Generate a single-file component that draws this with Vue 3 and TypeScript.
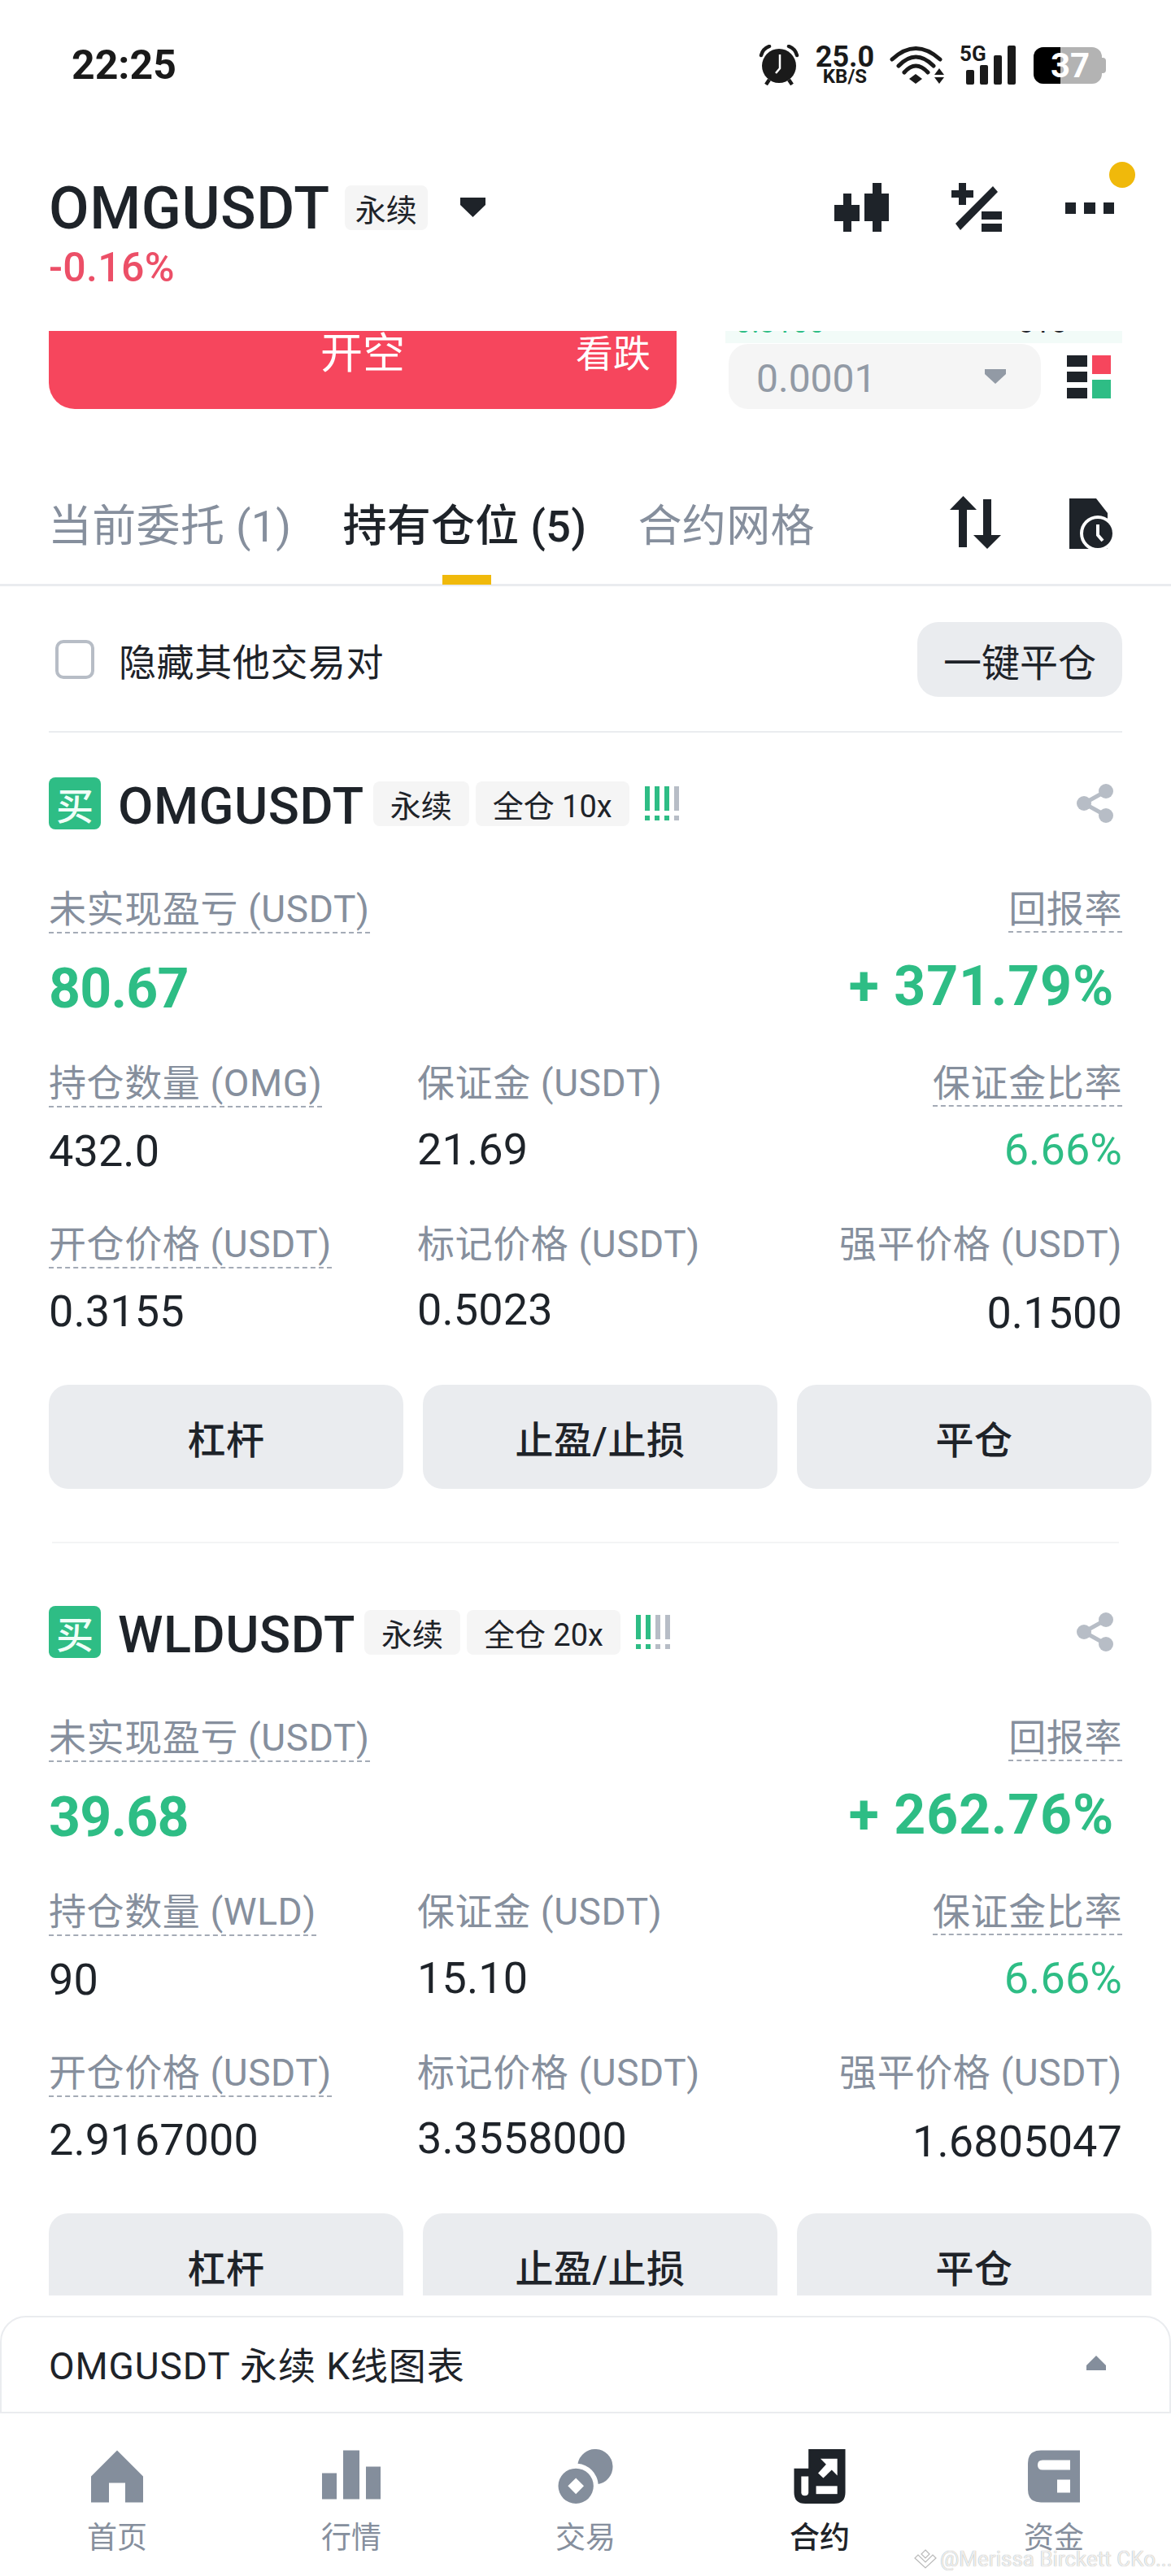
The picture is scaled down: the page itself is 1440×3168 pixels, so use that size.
<template>
  <div class="page">
    <div class="status">
      <span class="time">22:25</span>
      <div class="status-right">
        <svg class="ic-alarm" viewBox="0 0 50 50" width="50" height="50">
          <circle cx="25" cy="26" r="21" fill="#1a1a1a" />
          <path d="M3 13Q5 5 13 2M47 13Q45 5 37 2" fill="none" stroke="#1a1a1a" stroke-width="4.5" stroke-linecap="round" />
          <path d="M9 49l4-6M41 49l-4-6" stroke="#1a1a1a" stroke-width="4.5" />
          <path d="M26 12V29L21 35" fill="none" stroke="#fff" stroke-width="2.5" />
        </svg>
        <div class="speed">
          <span class="speed-num">25.0</span>
          <span class="speed-unit">KB/S</span>
        </div>
        <svg class="ic-wifi" viewBox="0 0 68 48" width="68" height="48">
          <path d="M3 17Q32 -10 62 17M11 25Q32 3 54 25M18 33Q32 17 47 33" fill="none" stroke="#1a1a1a" stroke-width="5" stroke-linecap="round" />
          <path d="M32 35l8 6-8 6-8-6z" fill="#1a1a1a" />
          <path d="M61 28l6 8H55zM61 47l-6-8h12z" fill="#1a1a1a" />
        </svg>
        <div class="signal">
          <span class="five-g">5G</span>
          <svg viewBox="0 0 61 48" width="61" height="48">
            <rect y="30" width="10" height="18" rx="2" fill="#1a1a1a" />
            <rect x="17" y="24" width="10" height="24" rx="2" fill="#1a1a1a" />
            <rect x="34" y="12" width="10" height="36" rx="2" fill="#1a1a1a" />
            <rect x="51" width="10" height="48" rx="2" fill="#1a1a1a" />
          </svg>
        </div>
        <div class="battery">
          <span class="battery-level"></span>
          <span class="battery-num">37</span>
          <span class="battery-nub"></span>
        </div>
      </div>
    </div>

    <div class="header">
      <div>
        <div class="symbol-row">
          <span class="symbol">OMGUSDT</span>
          <span class="tag tag-top">永续</span>
          <svg class="symbol-caret" viewBox="0 0 31 24" width="31" height="24">
            <path d="M0 0H31V9L15.5 24L0 9Z" fill="#1e2329" />
          </svg>
        </div>
        <div class="change">-0.16%</div>
      </div>
      <div class="header-icons">
        <svg viewBox="0 0 68 60" width="68" height="60" fill="#1e2329">
          <path d="M11 13H21V27H31V47H21V60H11V47H0V27H11Z" />
          <path d="M47 0H58V13H67V47H58V60H47V47H37V13H47Z" />
        </svg>
        <svg viewBox="0 0 62 60" width="62" height="60" fill="#1e2329">
          <path d="M9 0H18V9H27V18H18V27H9V18H0V9H9Z" />
          <path d="M51 4L57 11L11 58L5 50Z" />
          <path d="M37 35H62V45H37ZM37 50H62V60H37Z" />
        </svg>
        <div class="more">
          <svg viewBox="0 0 60 14" width="60" height="14" fill="#1e2329">
            <rect width="13" height="14" />
            <rect x="23" width="14" height="14" />
            <rect x="47" width="13" height="14" />
          </svg>
          <span class="more-dot"></span>
        </div>
      </div>
    </div>

    <div class="scroll">
      <div class="trade">
        <div class="short-btn">
          <span></span>
          <span class="short-main">开空</span>
          <span class="short-sub">看跌</span>
        </div>
        <div class="book">
          <div class="book-strip"><span class="strip-green">0.3100</span><span class="strip-dark">515</span></div>
          <div class="book-foot">
            <div class="step">
              <span>0.0001</span>
              <svg viewBox="0 0 26 18" width="26" height="18"><path d="M0 0H26V6L13 18L0 6Z" fill="#929aa5" /></svg>
            </div>
            <svg viewBox="0 0 55 53" width="55" height="53">
              <path d="M0 0H25V14H0ZM0 20H25V33H0ZM0 40H25V53H0Z" fill="#1e2329" />
              <rect x="31" width="23" height="23" fill="#f6465d" />
              <rect x="31" y="30" width="23" height="23" fill="#2ebd85" />
            </svg>
          </div>
        </div>
      </div>

      <div class="tabs">
        <span class="tab">当前委托 (1)</span>
        <span class="tab tab-active">持有仓位 (5)</span>
        <span class="tab">合约网格</span>
        <div class="tab-icons">
          <svg viewBox="0 0 63 65" width="63" height="65" fill="#1e2329">
            <path d="M11 17H0L16.500 0L33 17H21V63H11Z" />
            <path d="M41 4H51V48H63L46 65L29 48H41Z" />
          </svg>
          <svg viewBox="0 0 53 62" width="53" height="62">
            <path d="M0 0H33L47 18V63H0Z" fill="#1e2329" />
            <circle cx="35" cy="43" r="22" fill="#fff" />
            <circle cx="35" cy="43" r="18" fill="#1e2329" />
            <path d="M35 32V45L41 52" fill="none" stroke="#fff" stroke-width="4" />
          </svg>
        </div>
      </div>

      <div class="hide-row">
        <label class="hide-check">
          <span class="checkbox"></span>
          <span>隐藏其他交易对</span>
        </label>
        <button class="close-all">一键平仓</button>
      </div>

      <div v-for="(pos, i) in positions" :key="pos.symbol" class="position" :class="{ 'position-next': i > 0 }">
        <div class="pos-head">
          <span class="buy">买</span>
          <span class="pos-symbol">{{ pos.symbol }}</span>
          <span class="tag">永续</span>
          <span class="tag tag-margin">全仓 {{ pos.leverage }}</span>
          <div class="risk">
            <span v-for="n in 4" :key="n" class="risk-bar" :class="{ on: n <= pos.risk }"></span>
          </div>
          <svg class="share" viewBox="0 0 45 48" width="45" height="48">
            <path d="M36 9L9 24L36 39" fill="none" stroke="#b7bdc6" stroke-width="5" />
            <circle cx="36" cy="9" r="9" fill="#b7bdc6" />
            <circle cx="9" cy="24" r="9" fill="#b7bdc6" />
            <circle cx="36" cy="39" r="9" fill="#b7bdc6" />
          </svg>
        </div>

        <div class="pnl-row">
          <div>
            <span class="label dotted">未实现盈亏 (USDT)</span>
            <div class="pnl">{{ pos.pnl }}</div>
          </div>
          <div class="cell-right">
            <span class="label dotted dotted-right">回报率</span>
            <div class="pnl pnl-roe">{{ pos.roe }}</div>
          </div>
        </div>

        <div v-for="(row, r) in rows(pos)" :key="r" class="grid-row" :class="{ 'grid-row-last': r === 1 }">
          <div
            v-for="cell in row"
            :key="cell.label"
            class="cell"
            :class="{ 'cell-right': cell.right }"
          >
            <div class="label-box">
              <span class="label" :class="{ dotted: cell.dotted, 'dotted-right': cell.dotted && cell.right }">{{ cell.label }}</span>
            </div>
            <div class="value" :class="{ 'value-up': cell.up }" :style="{ marginTop: cell.gap + 'px' }">{{ cell.value }}</div>
          </div>
        </div>

        <div class="actions">
          <button>杠杆</button>
          <button>止盈/止损</button>
          <button>平仓</button>
        </div>
      </div>
    </div>

    <div class="chart-bar">
      <span>OMGUSDT 永续 K线图表</span>
      <svg viewBox="0 0 24 18" width="24" height="18"><path d="M12 0L24 12V18H0V12Z" fill="#848e9c" /></svg>
    </div>

    <nav class="nav">
      <div class="nav-item">
        <svg viewBox="0 0 64 64" width="64" height="64" fill="#848e9c">
          <path d="M32 0L64 32V64H42V40H22V64H0V32Z" />
        </svg>
        <span>首页</span>
      </div>
      <div class="nav-item">
        <svg viewBox="0 0 72 64" width="72" height="64" fill="#848e9c">
          <path d="M0 28H18V60H0ZM26 0H46V60H26ZM54 20H72V60H54Z" />
        </svg>
        <span>行情</span>
      </div>
      <div class="nav-item">
        <svg viewBox="0 0 68 68" width="68" height="68" fill="#848e9c">
          <path d="M24.35 18.09A22 22 0 1 1 49.9 43.65A28 28 0 0 0 24.35 18.09Z" />
          <path fill-rule="evenodd" d="M22 24A22 22 0 1 1 22 68A22 22 0 1 1 22 24ZM22 36L12 46L22 56L32 46Z" />
        </svg>
        <span>交易</span>
      </div>
      <div class="nav-item nav-active">
        <svg viewBox="0 0 64 68" width="64" height="68">
          <path d="M18 0H64V54Q64 68 50 68H14Q0 68 0 54V24H18Z" fill="#1e2329" />
          <path d="M9 34H18V54Q18 58 13.500 58Q9 58 9 54Z" fill="#fff" />
          <path d="M27.500 46H54V56H27.500Z" fill="#fff" />
          <path d="M33 12H54V33L47 26L36.500 36L30 30L40 19Z" fill="#fff" />
        </svg>
        <span>合约</span>
      </div>
      <div class="nav-item">
        <svg viewBox="0 0 64 64" width="64" height="64">
          <path d="M16 0H64V64H16Q0 64 0 48V16Q0 0 16 0Z" fill="#848e9c" />
          <path d="M18 12H52V24H18Q12 24 12 18Q12 12 18 12Z" fill="#fff" />
          <rect x="36" y="36" width="16" height="16" fill="#fff" />
        </svg>
        <span>资金</span>
      </div>
    </nav>

    <div class="watermark">
      <svg viewBox="0 0 28 24" width="28" height="24" fill="none" stroke="#b9b9b9" stroke-width="1.200">
        <path d="M14 1l5 5-5 5-5-5zM1 11l13 12 13-12-4-4-9 9-9-9z" />
      </svg>
      <span>@Merissa Birckett CKo...</span>
    </div>
  </div>
</template>

<script setup lang="ts">
interface Position {
  symbol: string
  base: string
  leverage: string
  risk: number
  pnl: string
  roe: string
  size: string
  margin: string
  ratio: string
  entry: string
  mark: string
  liq: string
}

interface Cell {
  label: string
  value: string
  gap: number
  dotted?: boolean
  right?: boolean
  up?: boolean
}

const positions: Position[] = [
  {
    symbol: 'OMGUSDT',
    base: 'OMG',
    leverage: '10x',
    risk: 3,
    pnl: '80.67',
    roe: '+ 371.79%',
    size: '432.0',
    margin: '21.69',
    ratio: '6.66%',
    entry: '0.3155',
    mark: '0.5023',
    liq: '0.1500',
  },
  {
    symbol: 'WLDUSDT',
    base: 'WLD',
    leverage: '20x',
    risk: 2,
    pnl: '39.68',
    roe: '+ 262.76%',
    size: '90',
    margin: '15.10',
    ratio: '6.66%',
    entry: '2.9167000',
    mark: '3.3558000',
    liq: '1.6805047',
  },
]

const rows = (p: Position): Cell[][] => [
  [
    { label: `持仓数量 (${p.base})`, value: p.size, gap: 23, dotted: true },
    { label: '保证金 (USDT)', value: p.margin, gap: 21 },
    { label: '保证金比率', value: p.ratio, gap: 21, dotted: true, right: true, up: true },
  ],
  [
    { label: '开仓价格 (USDT)', value: p.entry, gap: 22, dotted: true },
    { label: '标记价格 (USDT)', value: p.mark, gap: 20 },
    { label: '强平价格 (USDT)', value: p.liq, gap: 24, right: true },
  ],
]
</script>

<style>
html,
body {
  margin: 0;
  background: #fff;
}
</style>

<style scoped>
.page {
  position: relative;
  width: 1440px;
  height: 3168px;
  display: flex;
  flex-direction: column;
  overflow: hidden;
  background: #fff;
  color: #1e2329;
  font-family: Roboto, "Noto Sans CJK SC", sans-serif;
}

.status {
  height: 160px;
  flex: none;
  display: flex;
  align-items: center;
  justify-content: space-between;
  padding: 0 85px 0 88px;
  box-sizing: border-box;
  color: #1a1a1a;
}

.time {
  font-size: 50px;
  font-weight: 700;
}

.status-right {
  display: flex;
  align-items: center;
}

.ic-alarm {
  margin-right: 18px;
}

.speed {
  display: flex;
  flex-direction: column;
  align-items: center;
  width: 76px;
  font-weight: 700;
}

.speed-num {
  font-size: 36px;
  line-height: 28px;
}

.speed-unit {
  font-size: 24px;
  line-height: 20px;
}

.ic-wifi {
  margin-left: 17px;
}

.signal {
  position: relative;
  margin-left: 18px;
  padding-left: 8px;
  display: flex;
}

.five-g {
  position: absolute;
  left: 0;
  top: -3px;
  font-size: 26px;
  line-height: 26px;
  font-weight: 700;
}

.battery {
  position: relative;
  margin-left: 22px;
  width: 84px;
  height: 45px;
  border-radius: 12px;
  background: #b3b3b3;
  overflow: visible;
  display: flex;
  align-items: center;
}

.battery-level {
  width: 33px;
  height: 45px;
  background: #000;
  border-radius: 12px 0 0 12px;
}

.battery-num {
  position: absolute;
  left: 21px;
  top: 0;
  line-height: 45px;
  font-size: 42px;
  font-weight: 700;
  color: #fff;
}

.battery-nub {
  position: absolute;
  left: 84px;
  top: 13px;
  width: 5px;
  height: 19px;
  background: #b3b3b3;
  border-radius: 0 4px 4px 0;
}

.header {
  height: 247px;
  flex: none;
  display: flex;
  justify-content: space-between;
  padding: 57px 70px 0 60px;
  box-sizing: border-box;
}

.symbol-row {
  display: flex;
  align-items: center;
  height: 80px;
}

.symbol {
  font-size: 72px;
  line-height: 80px;
  font-weight: 500;
  letter-spacing: 0.6px;
}

.tag {
  height: 55px;
  padding: 0 21px;
  display: flex;
  align-items: center;
  background: #f5f5f5;
  border-radius: 8px;
  font-size: 38px;
  white-space: nowrap;
  box-sizing: border-box;
}

.tag-top {
  margin: -3px 0 0 18px;
  padding: 0 13px;
  width: 102px;
}

.symbol-caret {
  margin: -4px 0 0 40px;
}

.change {
  margin-top: 4px;
  font-size: 50px;
  line-height: 56px;
  font-weight: 500;
  letter-spacing: 0.3px;
  color: #ec4f67;
}

.header-icons {
  display: flex;
  align-items: flex-start;
  gap: 76px;
  padding-top: 8px;
}

.more {
  position: relative;
  margin: 23px 0 0 2px;
  height: 14px;
}

.more-dot {
  position: absolute;
  left: 54px;
  top: -49px;
  width: 32px;
  height: 32px;
  border-radius: 50%;
  background: #f0b90b;
}

.scroll {
  height: 2416px;
  flex: none;
  overflow: hidden;
}

.trade {
  display: flex;
  align-items: flex-end;
  justify-content: space-between;
  margin: -42px 60px 0;
}

.short-btn {
  width: 772px;
  height: 138px;
  display: grid;
  grid-template-columns: 1fr auto 1fr;
  align-items: start;
  padding: 0 32px;
  box-sizing: border-box;
  border-radius: 0 0 32px 32px;
  background: #f6465d;
  color: #fff;
}

.short-main {
  font-size: 52px;
  line-height: 64px;
  margin-top: 39px;
}

.short-sub {
  justify-self: end;
  font-size: 46px;
  line-height: 60px;
  margin-top: 40px;
}

.book {
  width: 488px;
}

.book-strip {
  height: 15px;
  margin-bottom: 1px;
  padding: 0 68px 0 12px;
  display: flex;
  justify-content: space-between;
  align-items: flex-start;
  overflow: hidden;
  background: #f2fbf8;
  font-size: 36px;
  line-height: 36px;
}

.strip-green,
.strip-dark {
  margin-top: -28px;
}

.strip-green {
  color: #2ebd85;
}

.book-foot {
  display: flex;
  align-items: center;
  justify-content: space-between;
  padding: 0 13px 0 4px;
  height: 80px;
}

.step {
  width: 384px;
  height: 80px;
  display: flex;
  align-items: center;
  justify-content: space-between;
  padding: 0 43px 0 34px;
  box-sizing: border-box;
  border-radius: 24px;
  background: #f5f5f5;
  font-size: 48px;
  color: #929aa5;
}

.step span {
  margin-top: 5px;
}

.tabs {
  position: relative;
  height: 218px;
  display: flex;
  align-items: flex-start;
  gap: 63px;
  padding: 115px 72px 0 59px;
  box-sizing: border-box;
  border-bottom: 3px solid #eaecef;
}

.tab {
  position: relative;
  font-size: 54px;
  line-height: 60px;
  letter-spacing: 0.3px;
  color: #868f9d;
}

.tab-active {
  color: #1e2329;
  font-weight: 500;
}

.tab-active::after {
  content: "";
  position: absolute;
  left: 50%;
  top: 89px;
  width: 60px;
  height: 12px;
  margin-left: -27px;
  background: #f0b90b;
}

.tab-icons {
  margin-left: auto;
  display: flex;
  gap: 84px;
  margin-top: -8px;
}

.tab-icons svg:last-child {
  margin-top: 3px;
}

.hide-row {
  height: 180px;
  margin: 0 60px;
  display: flex;
  align-items: center;
  justify-content: space-between;
  box-sizing: border-box;
  padding-top: 2px;
  border-bottom: 2px solid #eaecef;
}

.hide-check {
  display: flex;
  align-items: center;
  gap: 30px;
  margin-left: 8px;
  font-size: 46px;
  letter-spacing: 0.6px;
}

.checkbox {
  width: 48px;
  height: 48px;
  box-sizing: border-box;
  border: 4px solid #b7bdc6;
  border-radius: 10px;
}

.close-all,
.actions button {
  border: none;
  background: #eaecef;
  color: #1e2329;
  font-family: inherit;
  font-size: 47px;
  padding: 0;
}

.close-all {
  width: 252px;
  height: 92px;
  border-radius: 26px;
}

.position {
  padding: 55px 0 0 60px;
}

.position-next {
  margin-top: 65px;
  padding-top: 79px;
  position: relative;
}

.position-next::before {
  content: "";
  position: absolute;
  left: 64px;
  top: 0;
  width: 1312px;
  height: 2px;
  background: #f3f4f5;
}

.pos-head {
  display: flex;
  align-items: center;
  height: 64px;
  padding-right: 71px;
}

.buy {
  width: 64px;
  height: 64px;
  display: flex;
  align-items: center;
  justify-content: center;
  border-radius: 8px;
  background: #2ebd85;
  color: #f0fff8;
  font-size: 46px;
  font-weight: 500;
}

.pos-symbol {
  margin: 8px 11px 0 21px;
  font-size: 63px;
  line-height: 70px;
  font-weight: 500;
  letter-spacing: 0.55px;
}

.tag-margin {
  margin-left: 8px;
  padding: 0 21px;
}

.risk {
  display: grid;
  grid-template-columns: repeat(4, 6px);
  column-gap: 6px;
  margin-left: 19px;
}

.risk-bar {
  height: 42px;
  background: linear-gradient(#b7bdc6 0 30px, transparent 30px 36px, #b7bdc6 36px);
}

.risk-bar.on {
  background: linear-gradient(#2ebd85 0 30px, transparent 30px 36px, #2ebd85 36px);
}

.share {
  margin-left: auto;
}

.pnl-row {
  display: flex;
  justify-content: space-between;
  padding-right: 60px;
  margin-top: 72px;
}

.label {
  display: inline-block;
  font-size: 46px;
  line-height: 52px;
  letter-spacing: 0.6px;
  color: #868f9d;
  white-space: nowrap;
}

.label.dotted {
  padding-bottom: 2px;
  border-bottom: 2px dashed #a4abb6;
}

.label.dotted-right {
  padding-bottom: 1px;
}

.pnl {
  margin-top: 32px;
  font-size: 68px;
  line-height: 72px;
  font-weight: 700;
  color: #2ebd85;
  letter-spacing: -0.8px;
}

.pnl-roe {
  margin: 30px 10px 0 0;
  letter-spacing: 0.8px;
  white-space: pre;
}

.cell-right {
  text-align: right;
}

.grid-row {
  display: grid;
  grid-template-columns: 453px 1fr auto;
  padding-right: 60px;
  margin-top: 54px;
  height: 146px;
}

.grid-row-last {
  height: 141px;
  margin-top: 52px;
}

.label-box {
  height: 57px;
}

.value {
  font-size: 54px;
  line-height: 60px;
  letter-spacing: 0.1px;
}

.value-up {
  color: #2ebd85;
}

.actions {
  display: flex;
  gap: 24px;
  margin-top: 58px;
  width: 1356px;
}

.actions button {
  flex: none;
  width: 436px;
  height: 128px;
  border-radius: 24px;
  font-weight: 500;
  letter-spacing: 0.5px;
}

.chart-bar {
  height: 120px;
  flex: none;
  margin-top: 25px;
  display: flex;
  align-items: center;
  justify-content: space-between;
  padding: 0 78px 4px 60px;
  box-sizing: border-box;
  border: 2px solid #eaecef;
  border-radius: 32px 32px 0 0;
  font-size: 46px;
  letter-spacing: 0.9px;
}

.chart-bar span {
  margin-left: -2px;
}

.nav {
  display: grid;
  grid-template-columns: repeat(5, 288px);
  flex: 1;
}

.nav-item {
  display: flex;
  flex-direction: column;
  align-items: center;
  height: 176px;
  padding-top: 44px;
  box-sizing: border-box;
  justify-content: flex-start;
  font-size: 37px;
  line-height: 44px;
  color: #868f9d;
}

.nav-item svg {
  height: 68px;
  margin-bottom: 21px;
}

.nav-active {
  color: #1e2329;
  font-weight: 500;
}

.watermark {
  position: absolute;
  left: 1124px;
  top: 3134px;
  display: flex;
  align-items: center;
  gap: 4px;
  font-size: 26px;
  line-height: 26px;
  color: rgba(255, 255, 255, 0.85);
  text-shadow: 0 0 1px #8a8a8a;
  white-space: nowrap;
}
</style>
